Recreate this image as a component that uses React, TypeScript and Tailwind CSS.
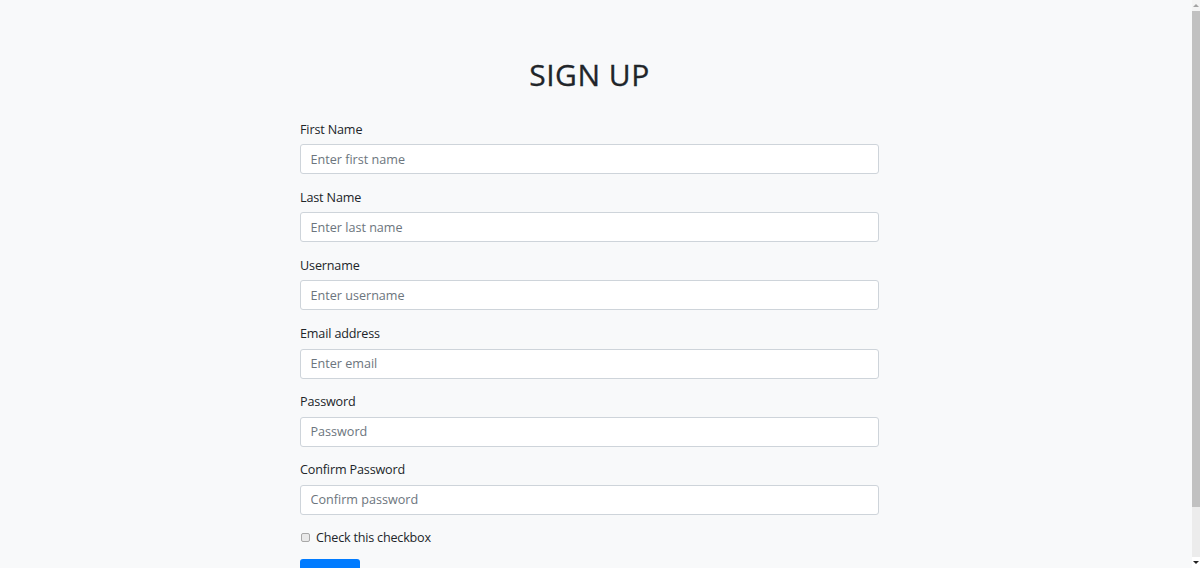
const fields = [
  { id: "firstName", label: "First Name", placeholder: "Enter first name", type: "text" },
  { id: "lastName", label: "Last Name", placeholder: "Enter last name", type: "text" },
  { id: "username", label: "Username", placeholder: "Enter username", type: "text" },
  { id: "email", label: "Email address", placeholder: "Enter email", type: "email" },
  { id: "password", label: "Password", placeholder: "Password", type: "password" },
  { id: "confirm", label: "Confirm Password", placeholder: "Confirm password", type: "password" },
];

function Scrollbar() {
  return (
    <div className="w-[8px] h-full flex flex-col bg-[#ececec]">
      <div className="h-[11px] flex items-center justify-center bg-[#f4f4f4]">
        <span className="block w-0 h-0 border-l-[3px] border-r-[3px] border-b-[3px] border-l-transparent border-r-transparent border-b-[#a3a3a3]" />
      </div>
      <div className="h-[496px] bg-[#c1c1c1]" />
      <div className="flex-1" />
      <div className="h-[11px] flex items-center justify-center bg-white">
        <span className="block w-0 h-0 border-l-[3px] border-r-[3px] border-t-[3px] border-l-transparent border-r-transparent border-t-[#222]" />
      </div>
    </div>
  );
}

export default function App() {
  return (
    <div
      className="h-screen w-full flex overflow-hidden bg-[#f8f9fa] text-[#212529]"
      style={{ fontFamily: '"Open Sans", "Noto Sans", sans-serif' }}
    >
      <div className="flex-1 overflow-hidden">
        <div className="pl-[300px] w-[879px] pt-[55px]">
          {/* Title */}
          <h1 className="text-center text-[30px] leading-[40px] font-medium tracking-[0.5px] mb-[24px] [-webkit-text-stroke:0.3px_#212529]">
            SIGN UP
          </h1>

          <form className="w-[579px]">
            {fields.map((f) => (
              <div key={f.id} className="mb-[12.8px]">
                <label
                  htmlFor={f.id}
                  className="block text-[12.6px] leading-[19px] pt-[1px] mb-[5.3px] tracking-[-0.15px]"
                >
                  {f.label}
                </label>
                <input
                  id={f.id}
                  type={f.type}
                  placeholder={f.placeholder}
                  className="block w-full h-[30px] px-[9.5px] text-[12.6px] bg-white border border-[#ced4da] rounded-[3px] placeholder:text-[#6c757d] outline-none"
                />
              </div>
            ))}

            {/* Checkbox */}
            <div className="flex items-center h-[19px] mt-[1.5px] mb-[12.6px]">
              <span className="w-[9px] h-[9px] ml-[1px] mr-[6px] border border-[#a8a8a8] rounded-[2px] bg-[#e9e9e9]" />
              <span className="text-[12.6px] leading-[19px] tracking-[-0.2px]">Check this checkbox</span>
            </div>

            <button
              type="submit"
              className="w-[60px] h-[30px] rounded-[3px] bg-[#007bff] text-white text-[12.6px] leading-[30px]"
            >
              Submit
            </button>
          </form>
        </div>
      </div>
      <Scrollbar />
    </div>
  );
}
